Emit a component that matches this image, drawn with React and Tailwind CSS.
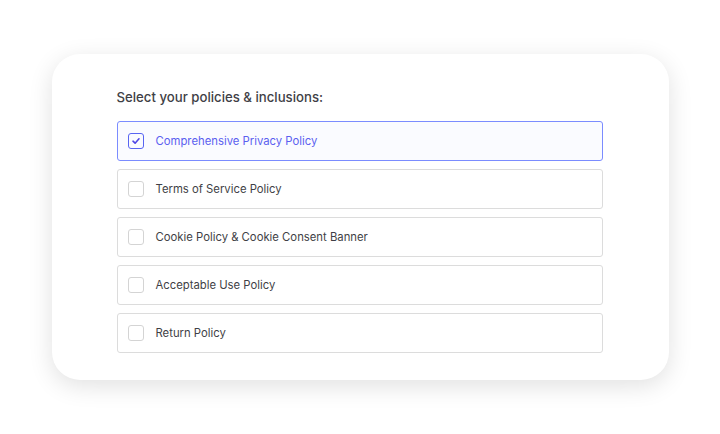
const policies = [
  { label: "Comprehensive Privacy Policy", checked: true },
  { label: "Terms of Service Policy", checked: false },
  { label: "Cookie Policy & Cookie Consent Banner", checked: false },
  { label: "Acceptable Use Policy", checked: false },
  { label: "Return Policy", checked: false },
];

export default function App() {
  return (
    <div className="min-h-[434px] bg-white pt-[54px] font-['Inter',sans-serif]">
      <div className="mx-auto w-[617px] rounded-[28px] bg-white pb-[27px] pl-[65px] pr-[66px] pt-[34px] shadow-[0_6px_24px_rgba(0,0,0,0.12)]">
        <p className="text-[13.2px] font-medium text-[#3f3f46]">Select your policies &amp; inclusions:</p>
        <div className="mt-[13px] flex flex-col gap-2">
          {policies.map((item) => (
            <div
              key={item.label}
              className={`flex h-10 items-center gap-3 rounded-[3px] border px-[10px] ${
                item.checked ? "border-[#7b8cff] bg-[#fafbff]" : "border-[#dcdcdc] bg-white"
              }`}
            >
              <span
                className={`flex h-4 w-4 items-center justify-center rounded-[3px] border ${
                  item.checked ? "border-[#5865f2]" : "border-[#d4d4d4]"
                }`}
              >
                {item.checked && (
                  <svg width="10" height="10" viewBox="0 0 10 10" fill="none">
                    <path d="M2 5.2 4.1 7.2 8 2.8" stroke="#4f46e5" strokeWidth="1.6" strokeLinecap="round" strokeLinejoin="round" />
                  </svg>
                )}
              </span>
              <span className={`pt-[2px] text-[11.3px] ${item.checked ? "text-[#5b5ff0]" : "text-[#3f3f46]"}`}>{item.label}</span>
            </div>
          ))}
        </div>
      </div>
    </div>
  );
}
